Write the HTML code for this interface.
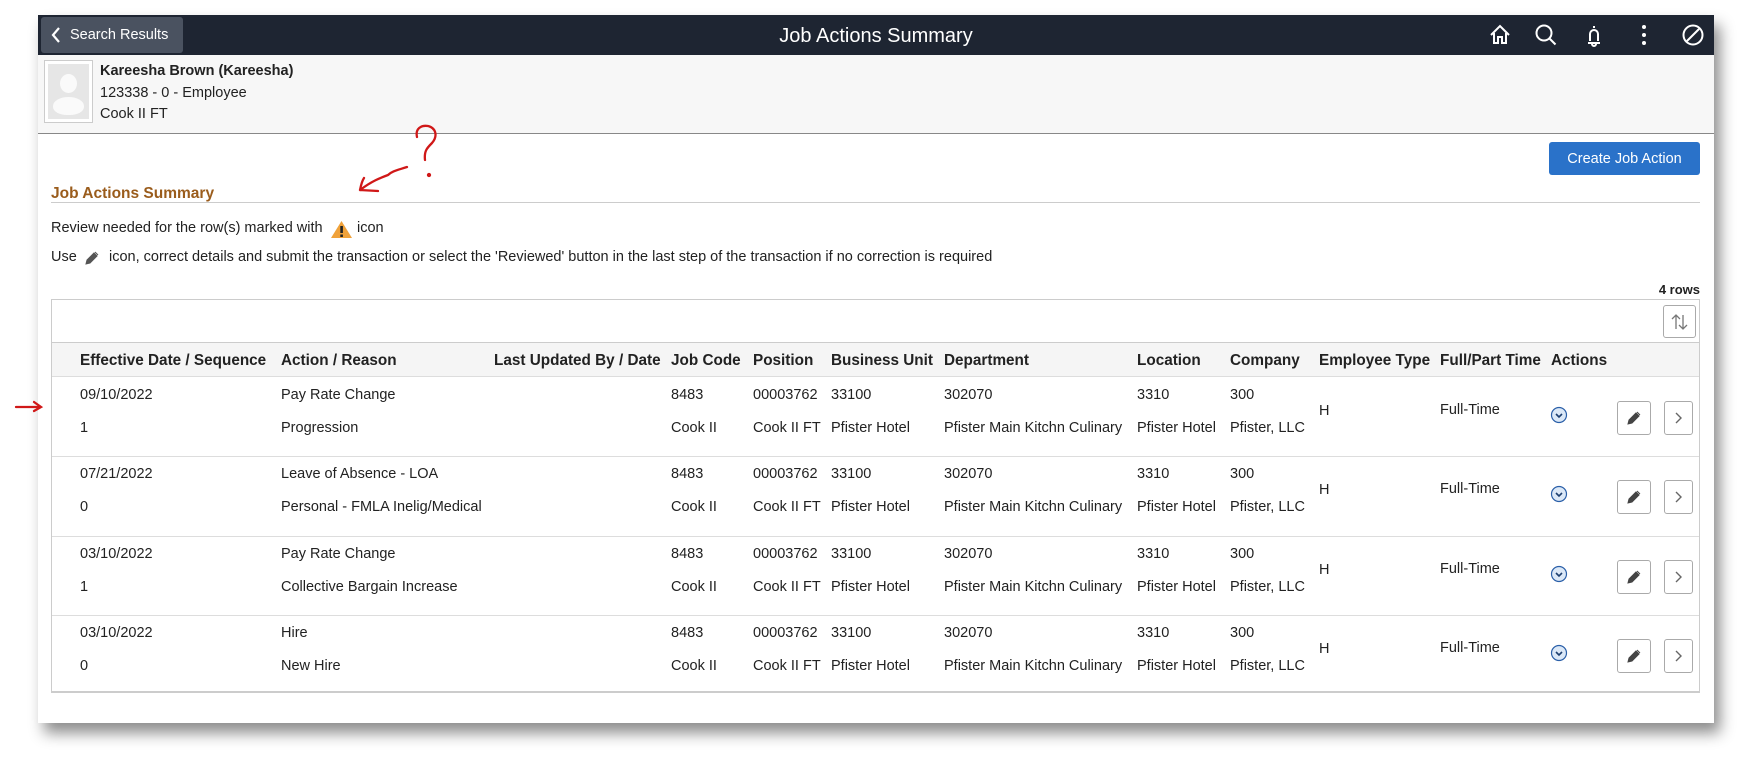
<!DOCTYPE html>
<html><head><meta charset="utf-8"><style>
*{margin:0;padding:0;box-sizing:border-box}
body{width:1750px;height:760px;background:#fff;font-family:"Liberation Sans",Arial,sans-serif;position:relative;overflow:hidden;color:#222}
.win{position:absolute;left:38px;top:15px;width:1676px;height:708px;background:#fff;box-shadow:6px 10px 14px rgba(0,0,0,.45)}
.abs{position:absolute}
.hdr{left:0;top:0;width:1676px;height:40px;background:#1e2532}
.back{left:3px;top:2px;width:142px;height:36px;background:#4a5260;border-radius:3px;color:#fff;font-size:14.5px;line-height:37px;padding-left:29px;white-space:nowrap}
.title{left:0;width:1676px;top:1px;text-align:center;color:#fff;font-size:20px;line-height:40px}
.prof{left:0;top:40px;width:1676px;height:79px;background:#f7f7f7;border-bottom:1px solid #888}
.t{position:absolute;font-size:14.5px;white-space:nowrap}
.b{font-weight:bold}
.h{font-size:15.3px}
.btn{border:1px solid #aaa;border-radius:3px;background:#fff}
</style></head><body>
<div class="win">
<div class="abs hdr"></div>
<div class="abs title">Job Actions Summary</div>
<div class="abs back">Search Results</div>
<svg class="abs" style="left:12px;top:11px" width="12" height="18"><path d="M9 2L3 9l6 7" stroke="#fff" stroke-width="2.2" fill="none"/></svg>
<svg class="abs" style="left:1450px;top:7px" width="226" height="26" fill="none" stroke="#fff" stroke-width="2">
<path d="M3 13L12 4l9 9M6 11v10h4v-6h4v6h4V11"/>
<circle cx="56" cy="11" r="7.5"/><path d="M61.5 16.5l6 6"/>
<path d="M100 21h12M102 19v-7a4 4 0 0 1 8 0v7M104 22a2 2 0 0 0 4 0M106 6v-2"/>
<circle cx="156" cy="5" r="2" fill="#fff" stroke="none"/><circle cx="156" cy="13" r="2" fill="#fff" stroke="none"/><circle cx="156" cy="21" r="2" fill="#fff" stroke="none"/>
<circle cx="205" cy="13" r="9.5"/><path d="M199 19l12-12"/>
</svg>
<div class="abs prof"></div>
<div class="abs" style="left:6px;top:45px;width:49px;height:63px;border:1px solid #ccc;background:#fff;padding:3px"><div style="width:100%;height:100%;background:#e6e6e6;position:relative;overflow:hidden">
<div style="position:absolute;left:12px;top:10px;width:17px;height:19px;border-radius:50%;background:#fafafa"></div>
<div style="position:absolute;left:5px;top:33px;width:31px;height:18px;border-radius:50% 50% 45% 45%;background:#fafafa"></div></div></div>
<div class="t b" style="left:62px;top:48px">Kareesha Brown (Kareesha)</div>
<div class="t" style="left:62px;top:70px">123338 - 0 - Employee</div>
<div class="t" style="left:62px;top:91px">Cook II FT</div>
<div class="abs" style="left:1511px;top:127px;width:151px;height:33px;background:#2a72c9;border-radius:3px;color:#fff;font-size:14.5px;line-height:35px;text-align:center">Create Job Action</div>
<div class="t b" style="left:13px;top:170px;font-size:15.5px;color:#9a5c1c">Job Actions Summary</div>
<div class="abs" style="left:13px;top:187px;width:1649px;height:1px;background:#ccc"></div>
<div class="t" style="left:13px;top:205px">Review needed for the row(s) marked with</div>
<svg class="abs" style="left:292px;top:205px" width="23" height="19"><path d="M11.5 1L22 18H1z" fill="#f0a23a"/><rect x="10.3" y="6" width="2.6" height="7" fill="#222"/><rect x="10.3" y="14.5" width="2.6" height="2.5" fill="#222"/></svg>
<div class="t" style="left:319px;top:205px">icon</div>
<div class="t" style="left:13px;top:234px">Use</div>
<svg class="abs" style="left:47px;top:236px" width="14" height="14"><path d="M1 13l1-4 7-7 3 3-7 7z M10 1l3 3" fill="#555" stroke="#555" stroke-width="1"/></svg>
<div class="t" style="left:71px;top:234px">icon, correct details and submit the transaction or select the 'Reviewed' button in the last step of the transaction if no correction is required</div>
<div class="t b" style="left:1600px;top:267px;width:62px;text-align:right;font-size:13px">4 rows</div>
<div class="abs" style="left:13px;top:284px;width:1649px;height:394px;border:1px solid #ccc;border-bottom:2px solid #ccc"></div>
<div class="abs btn" style="left:1625px;top:290px;width:33px;height:33px"></div>
<svg class="abs" style="left:1632px;top:298px" width="20" height="18" stroke="#777" stroke-width="1.3" fill="none"><path d="M6 16V2M2 6l4-4 4 4M13 2v14M9 12l4 4 4-4"/></svg>
<div class="abs" style="left:14px;top:327px;width:1647px;height:35px;background:#f5f5f5;border-top:1px solid #ccc;border-bottom:1px solid #ddd"></div>
<div id="tb"></div>
</div>
<svg class="abs" style="left:0;top:0" width="1750" height="760" fill="none" stroke="#d01818" stroke-width="2.3" stroke-linecap="round">
<path d="M16 407 L40 407 M34 402 L41 407 L34 411"/>
<path d="M417 137 C415 128 422 125 428 126 C436 128 438 136 432 143 C427 148 424 151 425 160"/>
<circle cx="429" cy="175" r="1" fill="#d01818"/>
<path d="M407 167 C398 170 392 171 388 175 C380 178 372 181 360 190 M360 190 C361 185 362 181 364 178 M360 190 L378 191"/>
</svg>
<script>
var rows=[["09/10/2022","1","Pay Rate Change","Progression"],["07/21/2022","0","Leave of Absence - LOA","Personal - FMLA Inelig/Medical"],["03/10/2022","1","Pay Rate Change","Collective Bargain Increase"],["03/10/2022","0","Hire","New Hire"]];
var hx=[42,243,456,633,715,793,906,1099,1192,1281,1402,1513];
var hs=["Effective Date / Sequence","Action / Reason","Last Updated By / Date","Job Code","Position","Business Unit","Department","Location","Company","Employee Type","Full/Part Time","Actions"];
var h="";
hs.forEach(function(s,i){h+='<div class="t b h" style="left:'+hx[i]+'px;top:337px">'+s+'</div>';});
rows.forEach(function(r,k){
 var y=362+k*79.3;
 if(k>0)h+='<div class="abs" style="left:14px;top:'+y+'px;width:1647px;height:1px;background:#ddd"></div>';
 var a=y+10,b=y+43,m=y+26;
 var c=[[hx[0],r[0],r[1]],[hx[1],r[2],r[3]],[hx[3],"8483","Cook II"],[hx[4],"00003762","Cook II FT"],[hx[5],"33100","Pfister Hotel"],[hx[6],"302070","Pfister Main Kitchn Culinary"],[hx[7],"3310","Pfister Hotel"],[hx[8],"300","Pfister, LLC"]];
 c.forEach(function(q){h+='<div class="t" style="left:'+q[0]+'px;top:'+a+'px">'+q[1]+'</div><div class="t" style="left:'+q[0]+'px;top:'+b+'px">'+q[2]+'</div>';});
 h+='<div class="t" style="left:'+hx[9]+'px;top:'+m+'px">H</div><div class="t" style="left:'+hx[10]+'px;top:'+(m-1)+'px">Full-Time</div>';
 h+='<svg class="abs" style="left:1512px;top:'+(m+3)+'px" width="18" height="18"><circle cx="9" cy="9" r="7.5" fill="#dbe8f7" stroke="#2a5fa8" stroke-width="1.2"/><path d="M6 8l3 3 3-3" stroke="#1d3f70" stroke-width="1.6" fill="none"/></svg>';
 h+='<div class="abs btn" style="left:1579px;top:'+(m-2)+'px;width:34px;height:34px"></div><svg class="abs" style="left:1589px;top:'+(m+8)+'px" width="14" height="14"><path d="M1 13l1-4 7-7 3 3-7 7z M10 1l3 3" fill="#444" stroke="#444"/></svg>';
 h+='<div class="abs btn" style="left:1626px;top:'+(m-2)+'px;width:29px;height:34px"></div><svg class="abs" style="left:1634px;top:'+(m+8)+'px" width="12" height="14"><path d="M4 2l5 5-5 5" stroke="#666" stroke-width="1.4" fill="none"/></svg>';
});
document.getElementById("tb").outerHTML=h;
</script>
</body></html>
